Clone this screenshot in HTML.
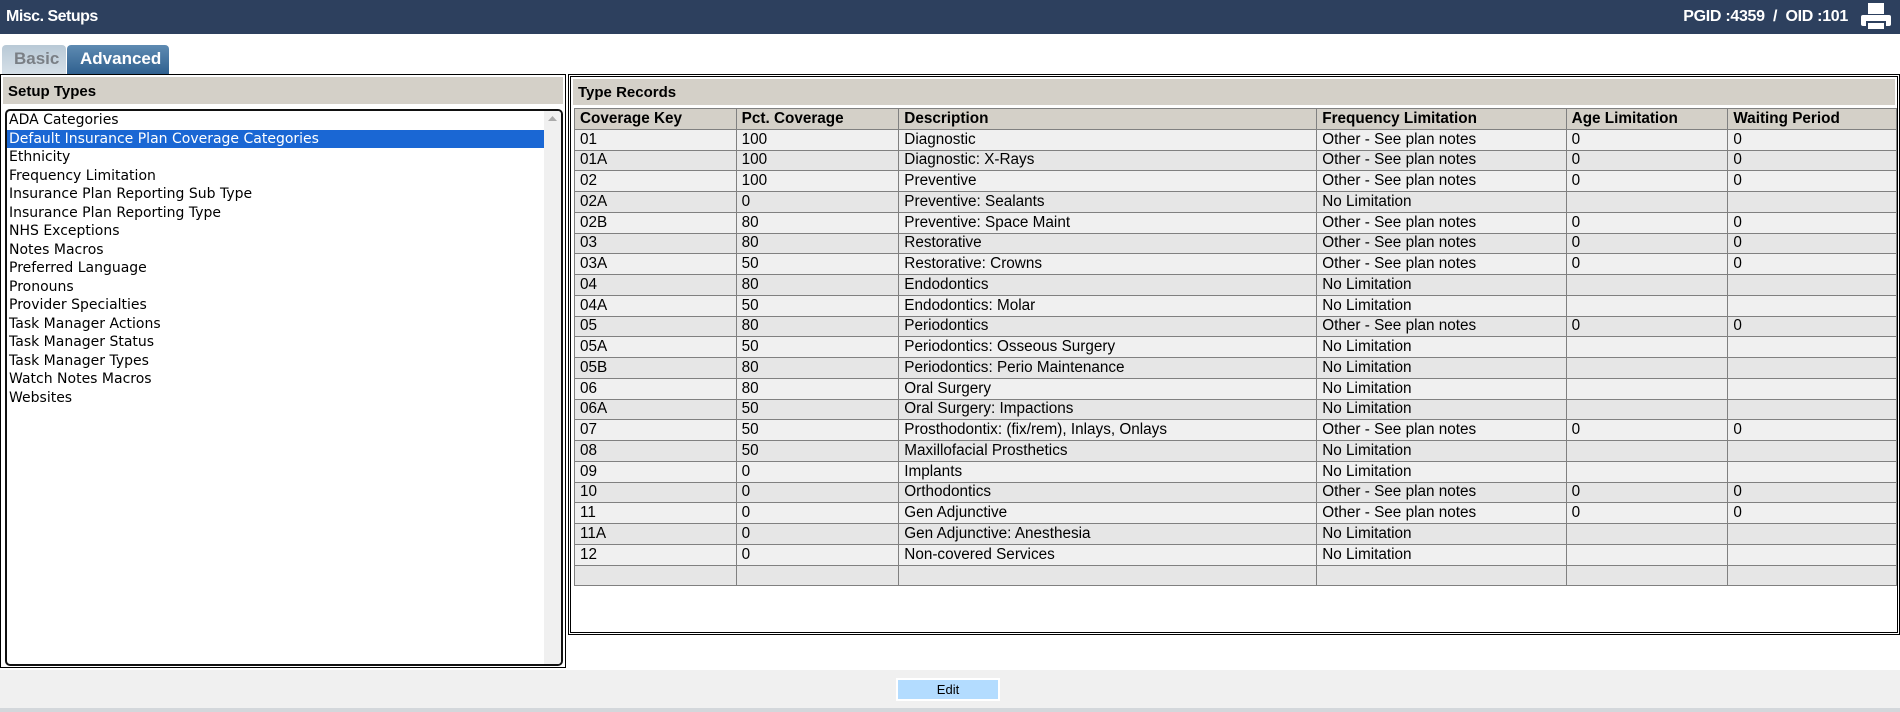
<!DOCTYPE html>
<html><head><style>
*{margin:0;padding:0;box-sizing:border-box}
body{width:1900px;height:712px;overflow:hidden;background:#fff;font-family:"Liberation Sans",Arial,sans-serif;position:relative}
.top{position:absolute;left:0;top:0;width:1900px;height:34px;background:#2d405e;color:#fff;font-weight:bold;font-size:16px}
.top .t{position:absolute;left:6px;top:8px;letter-spacing:-0.5px}
.top .r{position:absolute;right:52px;top:8px;font-size:16px;letter-spacing:-0.3px}
.tab{position:absolute;top:45px;height:30px;font-weight:bold;font-size:17px;padding-top:4px;border-radius:4px 4px 0 0}
.left{position:absolute;left:0;top:74px;width:566px;height:594px;border:1px solid #000}
.lh{position:absolute;left:2px;top:2px;right:2px;height:27px;background:#d4d0c8;font-weight:bold;font-size:15px;padding:6px 5px}
.lb{position:absolute;left:4px;top:34px;width:558px;height:557px;border:2px solid #111;border-radius:5px;background:#fff;overflow:hidden}
.lb .sb{position:absolute;right:0;top:0;width:17px;bottom:0;background:#f0f0f0}
.lb div.i{height:18.5px;font-family:"DejaVu Sans",sans-serif;font-size:14px;padding-left:2px;line-height:18px;width:540px;color:#000;white-space:nowrap}
.lb div.sel{background:#1a67d4;color:#fff}
.right{position:absolute;left:568px;top:74px;width:1332px;height:561px;border:3px double #000}
.rh{position:absolute;left:2px;top:2px;right:2px;height:26px;background:#d4d0c8;font-weight:bold;font-size:15px;padding:5px 5px}
table{position:absolute;left:3px;top:31px;border-collapse:collapse;font-size:15.3px}
td{border:1px solid #808080;height:20.75px;padding:0 5px;line-height:18px;white-space:nowrap}
tr.h td{background:#d4d0c8;font-weight:bold}
tr:nth-child(even) td{background:#f0f0f0}
tr:nth-child(odd):not(.h) td{background:#e6e6e6}
.foot{position:absolute;left:0;top:670px;width:1900px;height:38px;background:#f0f0f0}
.foot2{position:absolute;left:0;top:708px;width:1900px;height:4px;background:#d3d7db}
.edit{position:absolute;left:896px;top:678px;width:104px;height:23px;background:#b3dcff;border:2px solid #fff;text-align:center;font-size:13px;line-height:19px}
</style></head><body>
<div class="top"><span class="t">Misc. Setups</span><span class="r">PGID :4359 &nbsp;/&nbsp; OID :101</span>
<svg style="position:absolute;right:8px;top:3px" width="32" height="28" viewBox="0 0 32 28"><rect x="8" y="0" width="16" height="11" fill="#fff"/><rect x="1" y="12" width="30" height="11" rx="2" fill="#fff"/><rect x="6" y="18" width="20" height="9" fill="#2d405e"/><rect x="8" y="20" width="16" height="6" fill="#fff"/></svg></div>
<div class="tab" style="left:2px;width:64px;background:linear-gradient(#b8c9d6,#d6e0e8);color:#7a7f85;padding-left:12px">Basic</div>
<div class="tab" style="left:67px;width:102px;background:linear-gradient(#5e8bb2,#2e5f8e);color:#fff;padding-left:13px">Advanced</div>
<div class="left"><div class="lh">Setup Types</div>
<div class="lb"><div class="sb"><svg width="17" height="14"><path d="M4 10 L8.5 5 L13 10Z" fill="#aaa"/></svg></div>
<div class="i">ADA Categories</div><div class="i sel">Default Insurance Plan Coverage Categories</div><div class="i">Ethnicity</div><div class="i">Frequency Limitation</div><div class="i">Insurance Plan Reporting Sub Type</div><div class="i">Insurance Plan Reporting Type</div><div class="i">NHS Exceptions</div><div class="i">Notes Macros</div><div class="i">Preferred Language</div><div class="i">Pronouns</div><div class="i">Provider Specialties</div><div class="i">Task Manager Actions</div><div class="i">Task Manager Status</div><div class="i">Task Manager Types</div><div class="i">Watch Notes Macros</div><div class="i">Websites</div>
</div></div>
<div class="right"><div class="rh">Type Records</div>
<table>
<colgroup><col style="width:162px"><col style="width:163px"><col style="width:419px"><col style="width:250px"><col style="width:162px"><col style="width:169px"></colgroup>
<tr class="h"><td>Coverage Key</td><td>Pct. Coverage</td><td>Description</td><td>Frequency Limitation</td><td>Age Limitation</td><td>Waiting Period</td></tr>
<tr><td>01</td><td>100</td><td>Diagnostic</td><td>Other - See plan notes</td><td>0</td><td>0</td></tr>
<tr><td>01A</td><td>100</td><td>Diagnostic: X-Rays</td><td>Other - See plan notes</td><td>0</td><td>0</td></tr>
<tr><td>02</td><td>100</td><td>Preventive</td><td>Other - See plan notes</td><td>0</td><td>0</td></tr>
<tr><td>02A</td><td>0</td><td>Preventive: Sealants</td><td>No Limitation</td><td></td><td></td></tr>
<tr><td>02B</td><td>80</td><td>Preventive: Space Maint</td><td>Other - See plan notes</td><td>0</td><td>0</td></tr>
<tr><td>03</td><td>80</td><td>Restorative</td><td>Other - See plan notes</td><td>0</td><td>0</td></tr>
<tr><td>03A</td><td>50</td><td>Restorative: Crowns</td><td>Other - See plan notes</td><td>0</td><td>0</td></tr>
<tr><td>04</td><td>80</td><td>Endodontics</td><td>No Limitation</td><td></td><td></td></tr>
<tr><td>04A</td><td>50</td><td>Endodontics: Molar</td><td>No Limitation</td><td></td><td></td></tr>
<tr><td>05</td><td>80</td><td>Periodontics</td><td>Other - See plan notes</td><td>0</td><td>0</td></tr>
<tr><td>05A</td><td>50</td><td>Periodontics: Osseous Surgery</td><td>No Limitation</td><td></td><td></td></tr>
<tr><td>05B</td><td>80</td><td>Periodontics: Perio Maintenance</td><td>No Limitation</td><td></td><td></td></tr>
<tr><td>06</td><td>80</td><td>Oral Surgery</td><td>No Limitation</td><td></td><td></td></tr>
<tr><td>06A</td><td>50</td><td>Oral Surgery: Impactions</td><td>No Limitation</td><td></td><td></td></tr>
<tr><td>07</td><td>50</td><td>Prosthodontix: (fix/rem), Inlays, Onlays</td><td>Other - See plan notes</td><td>0</td><td>0</td></tr>
<tr><td>08</td><td>50</td><td>Maxillofacial Prosthetics</td><td>No Limitation</td><td></td><td></td></tr>
<tr><td>09</td><td>0</td><td>Implants</td><td>No Limitation</td><td></td><td></td></tr>
<tr><td>10</td><td>0</td><td>Orthodontics</td><td>Other - See plan notes</td><td>0</td><td>0</td></tr>
<tr><td>11</td><td>0</td><td>Gen Adjunctive</td><td>Other - See plan notes</td><td>0</td><td>0</td></tr>
<tr><td>11A</td><td>0</td><td>Gen Adjunctive: Anesthesia</td><td>No Limitation</td><td></td><td></td></tr>
<tr><td>12</td><td>0</td><td>Non-covered Services</td><td>No Limitation</td><td></td><td></td></tr>
<tr><td></td><td></td><td></td><td></td><td></td><td></td></tr>
</table></div>
<div class="foot"></div><div class="foot2"></div>
<div class="edit">Edit</div>
</body></html>
